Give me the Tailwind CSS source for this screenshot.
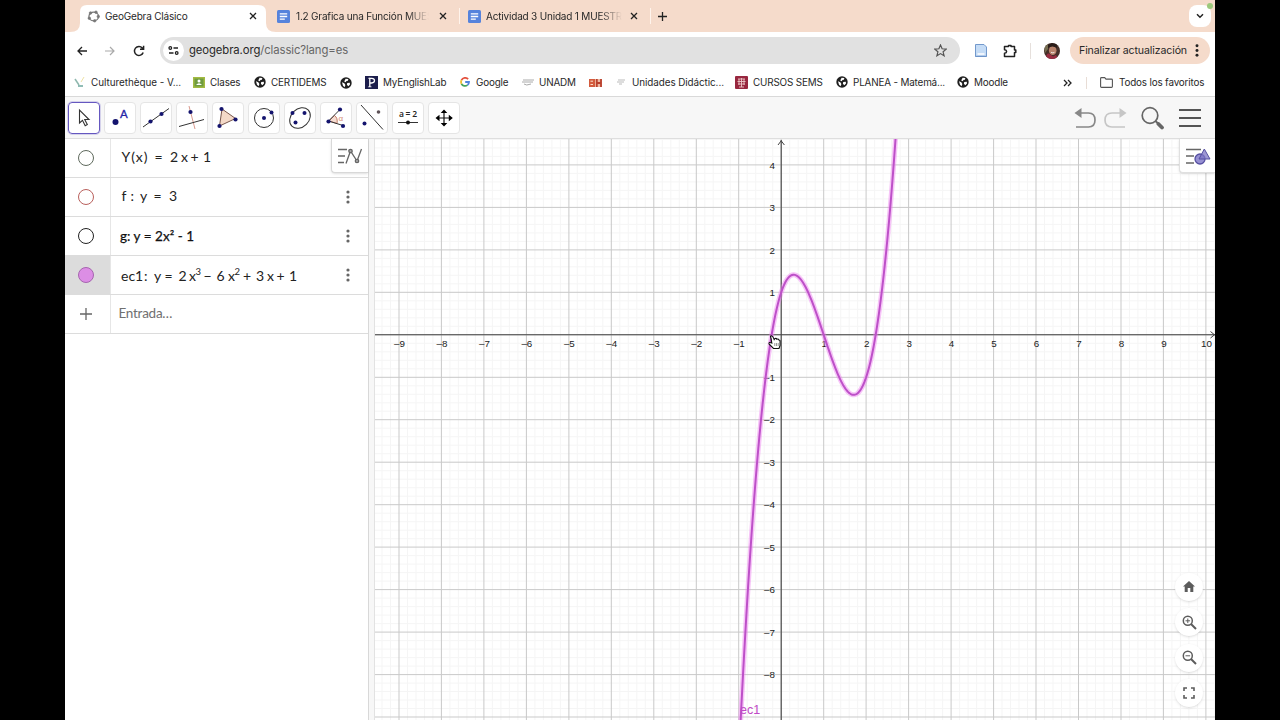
<!DOCTYPE html>
<html lang="es">
<head>
<meta charset="utf-8">
<title>GeoGebra Clásico</title>
<script src="https://cdn.jsdelivr.net/npm/@tailwindcss/browser@4"></script>
</head>
<body class="bg-black overflow-hidden">
<svg class="hidden">
  <defs>
    <symbol id="globe" viewBox="0 0 12 12"><circle cx="6" cy="6" r="5.7" fill="#1f1f1f"/><path d="M2 5.2 4.300 6.200 5.400 8 4.600 10.300 3 8.800ZM5.600 1.700 8.300 2 8 3.700 6.300 4 6 5.300 4.200 4.600ZM7.200 6 9.800 5.800 10 7.500 8.300 9.300 6.900 7.800Z" fill="#fff"/></symbol>
    <symbol id="doc" viewBox="0 0 13 13"><rect width="13" height="13" rx="1.500" fill="#5683dc"/><path d="M2.800 3.800H10.200M2.800 6.500H10.200M2.800 9.200H7.800" stroke="#fff" stroke-width="1.300"/></symbol>
    <symbol id="close" viewBox="0 0 8 8"><path d="M1 1 7 7M7 1 1 7" stroke="#222" stroke-width="1.300"/></symbol>
    <symbol id="dots" viewBox="0 0 4 14"><circle cx="2" cy="2" r="1.600"/><circle cx="2" cy="7" r="1.600"/><circle cx="2" cy="12" r="1.600"/></symbol>
  </defs>
</svg>
<div class="ml-[65px] flex h-[720px] w-[1150px] flex-col overflow-hidden bg-white font-['Inter',sans-serif] text-[#282828]">

  <!-- Tab strip -->
  <div class="relative flex h-8 shrink-0 items-center bg-[#f5dbcb] text-[10px] tracking-[-0.19px]">
    <svg class="absolute left-0 top-0" width="220" height="32"><path d="M5 32Q15 32 15 23V12Q15 5 22 5H193Q201 5 201 12V23Q201 32 211 32Z" fill="#fff"/></svg>
    <div class="relative flex h-8 w-[212px] items-center pl-[22px]">
      <svg width="13" height="13" viewBox="0 0 13 13" fill="none" stroke="#777" stroke-width="1.200"><ellipse cx="6.700" cy="6.500" rx="4.800" ry="4.300"/><g fill="#777" stroke-width=".6"><circle cx="3.500" cy="3" r="1.300"/><circle cx="9" cy="2.200" r="1.300"/><circle cx="11.300" cy="6.500" r="1.300"/><circle cx="7.700" cy="10.800" r="1.300"/><circle cx="2.300" cy="8.200" r="1.300"/></g></svg>
      <span class="ml-[5px] w-[143px] whitespace-nowrap">GeoGebra Clásico</span>
      <svg class="ml-[.5px]" width="8" height="8"><use href="#close"/></svg>
    </div>
    <div class="flex w-[191px] items-center">
      <svg class="shrink-0" width="13" height="13"><use href="#doc"/></svg>
      <span class="ml-[6px] w-[133px] overflow-hidden whitespace-nowrap [mask-image:linear-gradient(90deg,#000_84%,transparent)]">1.2 Grafica una Función MUES</span>
      <svg class="ml-[10px]" width="8" height="8"><use href="#close"/></svg>
      <i class="ml-3 h-4 w-px bg-[#fff4ec]"></i>
    </div>
    <div class="flex items-center">
      <svg class="shrink-0" width="13" height="13"><use href="#doc"/></svg>
      <span class="ml-[5px] w-[136px] overflow-hidden whitespace-nowrap [mask-image:linear-gradient(90deg,#000_84%,transparent)]">Actividad 3 Unidad 1 MUESTR</span>
      <svg class="ml-[7.5px]" width="8" height="8"><use href="#close"/></svg>
      <i class="ml-3 h-4 w-px bg-[#fff4ec]"></i>
      <svg class="ml-[7.5px]" width="9" height="9" viewBox="0 0 9 9"><path d="M4.500 0V9M0 4.500H9" stroke="#222" stroke-width="1.300"/></svg>
    </div>
    <div class="ml-auto mr-1 flex size-[22px] items-center justify-center rounded-lg bg-white"><svg width="8" height="6" viewBox="0 0 8 6" fill="none" stroke="#222" stroke-width="1.500"><path d="M1 1.300 4 4.200 7 1.300"/></svg></div>
    <i class="absolute right-[2px] top-[3px] size-[6px] rounded-full bg-[#9cc87b]"></i>
  </div>

  <!-- Address bar -->
  <div class="flex h-[37px] shrink-0 items-center">
    <svg class="ml-3" width="10" height="10" viewBox="0 0 10 10" fill="none" stroke="#222" stroke-width="1.300"><path d="M10 5H1M5 1 1 5 5 9"/></svg>
    <svg class="ml-[18px]" width="10" height="10" viewBox="0 0 10 10" fill="none" stroke="#aaa" stroke-width="1.200"><path d="M0 5H9M5 1 9 5 5 9"/></svg>
    <svg class="ml-[18px]" width="12" height="12" viewBox="0 0 12 12" fill="none" stroke="#222" stroke-width="1.500"><path d="M10.200 7.500A4.500 4.500 0 1 1 9.300 2.900L10.500 4.100M10.600 .7V4.300H7"/></svg>
    <div class="ml-[15px] flex h-[27px] w-[800px] items-center rounded-full bg-[#e1e1e1] pl-[3px] text-[11.300px] tracking-[-0.09px]">
      <div class="flex size-[21px] items-center justify-center rounded-full bg-white"><svg width="11" height="9" viewBox="0 0 11 9" fill="none" stroke="#222" stroke-width="1.300"><circle cx="2.300" cy="2" r="1.300"/><path d="M5.500 2H10M1 7H5.500"/><circle cx="8.700" cy="7" r="1.300"/></svg></div>
      <span class="ml-[5px] whitespace-nowrap">geogebra.org<span class="text-[#666]">/classic?lang=es</span></span>
      <svg class="ml-auto mr-[13px]" width="13" height="13" viewBox="0 0 13 13" fill="none" stroke="#555" stroke-width="1.200"><path d="M6.500 1 8.100 4.800 12.200 5.100 9.100 7.800 10.100 11.800 6.500 9.600 2.900 11.800 3.900 7.800 .8 5.100 4.900 4.800Z"/></svg>
    </div>
    <svg class="ml-[15px]" width="12" height="13" viewBox="0 0 12 13"><path d="M.5 .5H9L11.500 3V12.500H.5Z" fill="#c5dcf6" stroke="#7399cc"/><path d="M2.500 10H9.500" stroke="#fff" stroke-width="1.500"/><path d="M.5 12.300H11.500" stroke="#6d93c8"/></svg>
    <svg class="ml-[16px]" width="14" height="14" viewBox="0 0 14 14" fill="none" stroke="#222" stroke-width="1.500"><path d="M1.500 2.500H5.500V1.500H8V2.500H11.500V6H12.800V8.500H11.500V12.500H1.500V9.300Q3.600 9 3.600 7.500T1.500 5.700Z" stroke-linejoin="round"/></svg>
    <i class="ml-[13px] h-4 w-px bg-[#e6e0dc]"></i>
    <svg class="ml-[13px]" width="16" height="16" viewBox="0 0 16 16"><defs><clipPath id="face"><circle cx="8" cy="8" r="8"/></clipPath></defs><g clip-path="url(#face)"><path d="M0 0H16V16H0Z" fill="#463029"/><path d="M0 3 4 0V6L1 10Z" fill="#746c50"/><ellipse cx="8.700" cy="7.500" rx="3.800" ry="4.500" fill="#b9836c"/><path d="M4 5Q8 2 13 5L13 1 8 0 4 2Z" fill="#2a1d19"/><path d="M2 16Q2 10 5 10.500L9 13.500 12 12 14 16Z" fill="#9a2c41"/><path d="M7 9.300Q9 10.500 10.500 9.300" stroke="#fff" stroke-width=".8" fill="none"/></g></svg>
    <div class="ml-[10px] flex h-[27px] w-[140px] items-center rounded-full bg-[#f5dbcb] pl-[9px] text-[10.600px] tracking-[-0.12px]"><span class="w-[108px] whitespace-nowrap">Finalizar actualización</span><svg class="ml-[8px] shrink-0" width="4" height="13" fill="#222"><use href="#dots"/></svg></div>
  </div>

  <!-- Bookmarks -->
  <div class="flex h-[28px] shrink-0 items-center whitespace-nowrap border-b border-[#d9d9d9] pl-[9px] text-[9.900px] tracking-[-0.17px]">
    <div class="flex w-[119px] items-center gap-[5px]"><svg width="12" height="12" viewBox="0 0 12 12" fill="none"><path d="M1 3 5 9" stroke="#8fb7ae" stroke-width="1.500"/><path d="M10 1 7 6" stroke="#eee2a4"/><path d="M4 10H9" stroke="#6da79e" stroke-width="1.500"/></svg><span class="tracking-[-0.04px]">Culturethèque - V...</span></div>
    <div class="flex w-[61px] items-center gap-[5px]"><svg width="12" height="11" viewBox="0 0 12 11"><rect width="12" height="11" fill="#a3ba42"/><rect x="1.500" y="1.500" width="9" height="8" fill="#6f9b3f"/><circle cx="6" cy="4" r="1.500" fill="#fff"/><path d="M3 8Q6 4.500 9 8Z" fill="#fff"/></svg><span>Clases</span></div>
    <div class="flex w-[86px] items-center gap-[5px]"><svg width="12" height="12"><use href="#globe"/></svg><span>CERTIDEMS</span></div>
    <div class="flex w-[25px] items-center"><svg width="12" height="12"><use href="#globe"/></svg></div>
    <div class="flex w-[95px] items-center gap-[5px]"><svg width="13" height="13" viewBox="0 0 13 13"><rect width="13" height="13" fill="#1c1e4c"/><path d="M4.800 11V2.300H6.700Q9.500 2.300 9.500 4.600T6.700 7H5" fill="none" stroke="#fff" stroke-width="1.300"/><path d="M3.200 2.300H5M3.200 10.800H6.500" stroke="#fff" stroke-width=".8"/></svg><span>MyEnglishLab</span></div>
    <div class="flex w-[62px] items-center gap-[6px]"><svg width="10" height="10" viewBox="0 0 10 10" fill="none" stroke-width="1.800"><path d="M8.100 2.200A4 4 0 0 0 1.500 3.200" stroke="#e4523f"/><path d="M1.500 3.200A4 4 0 0 0 1.500 6.800" stroke="#eebc31"/><path d="M1.500 6.800A4 4 0 0 0 7.500 8.100" stroke="#46a45c"/><path d="M7.500 8.100A4 4 0 0 0 9 5H5.200" stroke="#4f83df"/></svg><span>Google</span></div>
    <div class="flex w-[67px] items-center gap-[5px]"><svg width="12" height="9" viewBox="0 0 12 9" fill="none" stroke="#aaa"><path d="M1 2H12M0 4H11M2 6Q4 8 9 6"/></svg><span>UNADM</span></div>
    <div class="flex w-[28px] items-center"><svg width="13" height="8" viewBox="0 0 13 8" fill="none"><path d="M0 0H13V8H0Z" fill="#eeb9a2"/><path d="M0 0H6V8H0Z" fill="#d35b3d"/><path d="M1.500 2.200H4M1.500 5.500H4" stroke="#fbe2cc"/><path d="M7.800 0V8M12 0V8M7 4H12" stroke="#b9402d" stroke-width="1.800"/></svg></div>
    <div class="flex w-[118px] items-center gap-[7px]"><svg width="8" height="6" viewBox="0 0 8 6" fill="none" stroke="#bbb"><path d="M1 1H8M0 3H7M2 5H5"/></svg><span class="tracking-[-0.08px]">Unidades Didáctic...</span></div>
    <div class="flex w-[101px] items-center gap-[5px]"><svg width="13" height="13" viewBox="0 0 13 13"><rect width="13" height="13" rx="1" fill="#98273f"/><path d="M6.500 2V11M3 3H10M2.500 5.500H10.500M3 8H10M4 3V9M9 3V9M4 11H9" stroke="#edc8ca" stroke-width=".9"/></svg><span>CURSOS SEMS</span></div>
    <div class="flex w-[121px] items-center gap-[5px]"><svg width="12" height="12"><use href="#globe"/></svg><span>PLANEA - Matemá...</span></div>
    <div class="flex w-[106px] items-center gap-[5px]"><svg width="12" height="12"><use href="#globe"/></svg><span>Moodle</span></div>
    <svg width="9" height="8" viewBox="0 0 9 8" fill="none" stroke="#222" stroke-width="1.300"><path d="M1 1 4 4 1 7M5 1 8 4 5 7"/></svg>
    <i class="ml-[14px] h-3 w-px bg-[#e8ddd6]"></i>
    <svg class="ml-[13px]" width="13" height="11" viewBox="0 0 13 11" fill="none" stroke="#555" stroke-width="1.100"><path d="M.6 1.500Q.6 .6 1.500 .6H4.700L6 2.100H11.500Q12.400 2.100 12.400 3V9.500Q12.400 10.400 11.500 10.400H1.500Q.6 10.400 .6 9.500Z"/></svg>
    <span class="ml-[6px]">Todos los favoritos</span>
  </div>

  <!-- GeoGebra tools -->
  <div class="flex h-[42px] shrink-0 items-center gap-[4px] border-b border-[#dedede] bg-[#f7f7f7] pl-[3px]">
    <div class="flex size-8 items-center justify-center rounded-[4px] border border-[#6557c0] bg-white outline outline-[#a39bd9]/40"><svg width="30" height="30" viewBox="0 0 30 30"><path d="M10.500 7V20L13.500 17.300 16.200 22.700 18.300 21.600 15.700 16.500H20Z" fill="#fff" stroke="#333" stroke-width="1.100"/></svg></div>
    <div class="flex size-8 items-center justify-center rounded-[4px] border border-[#e5e5e5] bg-white"><svg width="30" height="30" viewBox="0 0 30 30"><circle cx="10.500" cy="19" r="3" fill="#14146e"/><text x="15" y="14.500" font-family="Liberation Sans" font-size="11.500" fill="#2626a8" stroke="#2626a8" stroke-width=".3">A</text></svg></div>
    <div class="flex size-8 items-center justify-center rounded-[4px] border border-[#e5e5e5] bg-white"><svg width="30" height="30" viewBox="0 0 30 30"><path d="M2 24 28 5.500" stroke="#333"/><circle cx="9.500" cy="18.500" r="2.100" fill="#14146e"/><circle cx="20.500" cy="11" r="2.100" fill="#14146e"/></svg></div>
    <div class="flex size-8 items-center justify-center rounded-[4px] border border-[#e5e5e5] bg-white"><svg width="30" height="30" viewBox="0 0 30 30"><path d="M12 3 18 26" stroke="#d99a8e"/><path d="M2 23.500 27 16.500" stroke="#333"/><circle cx="13.500" cy="9" r="2.100" fill="#14146e"/></svg></div>
    <div class="flex size-8 items-center justify-center rounded-[4px] border border-[#e5e5e5] bg-white"><svg width="30" height="30" viewBox="0 0 30 30"><path d="M9 6 22.500 15.500 6.500 23Z" fill="#f4d9c8" stroke="#77564c"/><g fill="#14146e"><circle cx="8.500" cy="6" r="2.100"/><circle cx="22.500" cy="16.500" r="2.100"/><circle cx="6.500" cy="23" r="2.100"/></g></svg></div>
    <div class="flex size-8 items-center justify-center rounded-[4px] border border-[#e5e5e5] bg-white"><svg width="30" height="30" viewBox="0 0 30 30"><circle cx="15" cy="15" r="9.500" fill="none" stroke="#333"/><circle cx="15" cy="15" r="2" fill="#14146e"/><circle cx="22.500" cy="9.500" r="2" fill="#14146e"/></svg></div>
    <div class="flex size-8 items-center justify-center rounded-[4px] border border-[#e5e5e5] bg-white"><svg width="30" height="30" viewBox="0 0 30 30"><ellipse cx="15" cy="15" rx="11.500" ry="9" transform="rotate(-45 15 15)" fill="none" stroke="#333"/><g fill="#14146e"><circle cx="7.500" cy="10" r="2"/><circle cx="19.500" cy="10" r="2"/><circle cx="10.500" cy="19.500" r="2"/></g></svg></div>
    <div class="flex size-8 items-center justify-center rounded-[4px] border border-[#e5e5e5] bg-white"><svg width="30" height="30" viewBox="0 0 30 30"><path d="M8 18 13.500 12.500Q17 15 16 20.500Z" fill="#f6ddd2" stroke="#c47c69"/><path d="M19 6.500 7.500 18 22 22.500" fill="none" stroke="#333"/><g fill="#14146e"><circle cx="19" cy="6.500" r="2.100"/><circle cx="7.500" cy="18.500" r="2.100"/><circle cx="22" cy="23" r="2.100"/></g><text x="17.500" y="17.500" font-family="Liberation Sans" font-size="8" fill="#d58873">α</text></svg></div>
    <div class="flex size-8 items-center justify-center rounded-[4px] border border-[#e5e5e5] bg-white"><svg width="30" height="30" viewBox="0 0 30 30"><path d="M4 2 26 26.500" stroke="#333"/><circle cx="7.500" cy="20.500" r="2" fill="#14146e"/><circle cx="21.500" cy="9" r="1.800" fill="#5f5358"/></svg></div>
    <div class="flex size-8 items-center justify-center rounded-[4px] border border-[#e5e5e5] bg-white"><svg width="30" height="30" viewBox="0 0 30 30"><text x="6" y="14" textLength="18" font-family="Open Sans" font-weight="600" font-size="8.500" fill="#222">a=2</text><path d="M5 19.500H25" stroke="#333"/><circle cx="15" cy="19.500" r="2" fill="#111"/></svg></div>
    <div class="flex size-8 items-center justify-center rounded-[4px] border border-[#e5e5e5] bg-white"><svg width="30" height="30" viewBox="0 0 30 30"><path d="M15 8V22M8 15H22" stroke="#111" stroke-width="1.200"/><path d="M15 6.500 18.300 10H11.700ZM15 23.500 11.700 20H18.300ZM6.500 15 10.500 11.700V18.300ZM23.800 15 19.800 11.700V18.300Z" fill="#000"/></svg></div>
    <svg class="ml-auto mr-[2px]" width="24" height="24" viewBox="0 0 24 24" fill="none" stroke="#888" stroke-width="1.700"><path d="M3 7H14.500Q21 7 21 14T14.500 21H2"/><path d="M7.500 2 .5 7 7.500 12Z" fill="#888" stroke="none"/></svg>
    <svg class="mr-[9px]" width="24" height="24" viewBox="0 0 24 24" fill="none" stroke="#c6c6c6" stroke-width="1.700"><path d="M20 7H8Q1 7 1 14T8 21H21"/><path d="M15.500 2 22.500 7 15.500 12Z" fill="#c6c6c6" stroke="none"/></svg>
    <svg class="mr-[10px]" width="24" height="24" viewBox="0 0 24 24" fill="none" stroke="#666"><circle cx="9" cy="9.500" r="7.800" stroke-width="1.700"/><path d="M14.500 15 17.500 18" stroke-width="2"/><path d="M17.500 18 21 21.500" stroke-width="3.800" stroke-linecap="round"/></svg>
    <svg class="mr-[14px]" width="22" height="20" viewBox="0 0 22 20" stroke="#555" stroke-width="2"><path d="M0 2H22M0 10H22M0 18H22"/></svg>
  </div>

  <div class="flex min-h-0 flex-1">
    <!-- Algebra view -->
    <div class="relative w-[304px] border-r border-[#d8d8d8] font-['Lato',sans-serif] text-[14px] text-[#222]">
      <div class="flex h-[39px] items-center border-b border-[#dcdcdc]"><div class="flex h-full w-[46px] items-center justify-center border-r border-[#e6e6e6] pr-[3px]"><i class="size-4 rounded-full border border-[#5f6a5d] bg-white"></i></div><svg width="200" height="38"><text y="22.500" fill="#222"><tspan x="10.500" textLength="26">Y(x)</tspan><tspan x="43.500">=</tspan><tspan x="59">2</tspan><tspan x="70">x</tspan><tspan x="79.500">+</tspan><tspan x="92">1</tspan></text></svg></div>
      <div class="flex h-[39px] items-center border-b border-[#dcdcdc]"><div class="flex h-full w-[46px] items-center justify-center border-r border-[#e6e6e6] pr-[3px]"><i class="size-4 rounded-full border border-[#b9605c] bg-white"></i></div><svg class="mr-[7px]" width="228" height="38"><text y="22.500" fill="#222"><tspan x="10.500">f</tspan><tspan x="19.500">:</tspan><tspan x="29">y</tspan><tspan x="42.500">=</tspan><tspan x="58">3</tspan></text></svg><svg width="4" height="14" fill="#666"><use href="#dots"/></svg></div>
      <div class="flex h-[39px] items-center border-b border-[#dcdcdc]"><div class="flex h-full w-[46px] items-center justify-center border-r border-[#e6e6e6] pr-[3px]"><i class="size-4 rounded-full border-[1.500px] border-[#222] bg-white"></i></div><svg class="mr-[7px]" width="228" height="38"><text x="9" y="23.500" textLength="74" xml:space="preserve" font-size="13.500" fill="#111" stroke="#111" stroke-width=".25">g: y = 2x² - 1</text></svg><svg width="4" height="14" fill="#666"><use href="#dots"/></svg></div>
      <div class="flex h-[39px] items-center border-b border-[#dcdcdc]"><div class="flex h-full w-[46px] items-center justify-center border-r border-[#e6e6e6] bg-[#dcdcdc] pr-[3px]"><i class="size-4 rounded-full border border-[#a765b0] bg-[#dc8ee5]"></i></div><svg class="mr-[7px]" width="228" height="38"><text y="25" fill="#222"><tspan x="10">ec1</tspan><tspan x="33">:</tspan><tspan x="43">y</tspan><tspan x="53.500">=</tspan><tspan x="67.500">2</tspan><tspan x="78">x</tspan><tspan x="84.500" y="19" font-size="9.500">3</tspan><tspan x="92.500" y="25">−</tspan><tspan x="105.500">6</tspan><tspan x="117">x</tspan><tspan x="123.500" y="19" font-size="9.500">2</tspan><tspan x="132" y="25">+</tspan><tspan x="145">3</tspan><tspan x="156">x</tspan><tspan x="165.500">+</tspan><tspan x="178">1</tspan></text></svg><svg width="4" height="14" fill="#666"><use href="#dots"/></svg></div>
      <div class="flex h-[39px] items-center border-b border-[#dcdcdc]"><div class="flex h-full w-[46px] items-center justify-center border-r border-[#e6e6e6] pr-[3px]"><svg width="12" height="12" viewBox="0 0 12 12"><path d="M6 0V12M0 6H12" stroke="#666" stroke-width="1.300"/></svg></div><svg width="200" height="38"><text x="7.500" y="22.500" textLength="54" font-size="13.500" fill="#707070">Entrada…</text></svg></div>
      <div class="absolute right-0 top-0 flex h-[34px] w-[37px] items-center justify-center rounded-bl-[4px] border-b border-l border-[#d8d8d8] bg-white shadow-sm"><svg width="26" height="20" viewBox="0 0 26 20" fill="none" stroke="#666" stroke-width="1.300"><path d="M1 3.500H10M1 10H8M1 16.500H7"/><path d="M9 17.500 13.500 5 20 15 24.500 3"/><circle cx="13.500" cy="5" r="1.700" fill="#aaa"/><circle cx="20" cy="15" r="1.700" fill="#aaa"/></svg></div>
    </div>
    <div class="w-[5px] bg-[#f7f7f7]"></div>
    <!-- Graphics view -->
    <div class="relative flex-1 border-l border-[#e2e2e2]">
      <svg class="block" width="840" height="581" viewBox="375 139 840 581" font-family="Liberation Sans" font-size="9.800" fill="#222">
        <g id="plot"></g>
        <path d="M375 334.800H1215M781.200 720V140" stroke="#444" stroke-width="1.100"/>
        <path d="M778 145 781.200 140.800 784.400 145M1210.500 331.500 1214.500 334.800 1210.500 338" fill="none" stroke="#444"/>
        <g id="labels"></g>
        <path id="glow" fill="none" stroke="#ee7ff0" stroke-opacity=".45" stroke-width="5"/>
        <path id="curve" fill="none" stroke="#bd50c8" stroke-width="2"/>
        <text x="740" y="713.500" font-size="12.500" fill="#c04ac6">ec1</text>
        <path d="M771 338Q769.800 335.800 771.500 335.700 773 336 774.200 339.500L775 338.500Q776.300 338 776.900 339.300 778.200 338.500 778.900 340 780.200 339.800 780.100 342V345.500L779 348.500H773.500L769 344Q768.500 341.500 771.800 343Z" fill="#fff" stroke="#111" stroke-width="1.100"/><path d="M774.800 343V346M776.500 343V346M778.200 343V346" stroke="#555" stroke-width=".6"/>
      </svg>
      <div class="absolute right-0 top-0 flex h-[34px] w-[36px] items-center justify-end rounded-bl-[4px] border-b border-l border-[#e0e0e0] bg-white pr-[4px] shadow-sm"><svg width="26" height="20" viewBox="0 0 26 20" fill="none" stroke="#666" stroke-width="1.300"><path d="M1 3.500H16M1 10H9M1 17H9"/><circle cx="15" cy="13" r="5" fill="#9690d2" stroke="#5650a2"/><path d="M19.300 3 25 13H14Z" fill="#7d76c5" fill-opacity=".75" stroke="#5650a2" stroke-width="1"/></svg></div>
      <div class="absolute bottom-[13px] right-[12px] flex flex-col gap-[7.400px]">
        <div class="flex size-7 items-center justify-center rounded-full bg-white shadow"><svg width="12" height="11" viewBox="0 0 12 11" fill="#5c5c5c"><path d="M6 0 12 5.500H10.300V11H7.300V7H4.700V11H1.700V5.500H0Z"/></svg></div>
        <div class="flex size-7 items-center justify-center rounded-full bg-white shadow"><svg width="15" height="15" viewBox="0 0 15 15" fill="none" stroke="#5c5c5c" stroke-width="1.500"><circle cx="5.800" cy="5.800" r="4.500"/><path d="M9 9 14 14" stroke-width="1.900"/><path d="M3.500 5.800H8.100M5.800 3.500V8.100" stroke-width="1"/></svg></div>
        <div class="flex size-7 items-center justify-center rounded-full bg-white shadow"><svg width="15" height="15" viewBox="0 0 15 15" fill="none" stroke="#5c5c5c" stroke-width="1.500"><circle cx="5.800" cy="5.800" r="4.500"/><path d="M9 9 14 14" stroke-width="1.900"/><path d="M3.500 5.800H8.100" stroke-width="1"/></svg></div>
        <div class="flex size-7 items-center justify-center rounded-full bg-white shadow"><svg width="12" height="12" viewBox="0 0 12 12" fill="none" stroke="#5c5c5c" stroke-width="1.600"><path d="M1 4V1H4M8 1H11V4M11 8V11H8M4 11H1V8"/></svg></div>
      </div>
    </div>
  </div>
</div>
<script>
  const U = 42.47, X0 = 781.2, Y0 = 334.8;
  let minor = '', major = '', labels = '';
  for (let i = -50; i <= 55; i++) {
    const x = X0 + i * U / 5, y = Y0 - i * U / 5;
    const line = 'M' + x.toFixed(1) + ' 139V720', row = 'M375 ' + y.toFixed(1) + 'H1215';
    if (i % 5) { minor += line + row; } else { major += line + row; }
  }
  const sign = n => (n < 0 ? '–' : '') + Math.abs(n);
  for (let n = -9; n <= 10; n++) if (n) labels += `<text x="${X0 + n * U + 0.5}" y="347" text-anchor="middle">${sign(n)}</text>`;
  for (let n = -8; n <= 4; n++) if (n) labels += `<text x="775" y="${Y0 - n * U + 3.7}" text-anchor="end">${sign(n)}</text>`;
  document.getElementById('plot').innerHTML = `<path d="${minor}" stroke="#f5f5f5" fill="none"/><path d="${major}" stroke="#c9c9c9" fill="none"/>`;
  document.getElementById('labels').innerHTML = labels;
  let d = '';
  for (let x = -1; x <= 2.75; x += 0.02) {
    d += (d ? 'L' : 'M') + (X0 + x * U).toFixed(2) + ' ' + (Y0 - U * (2 * x ** 3 - 6 * x * x + 3 * x + 1)).toFixed(2);
  }
  document.getElementById('glow').setAttribute('d', d);
  document.getElementById('curve').setAttribute('d', d);
</script>
</body>
</html>
